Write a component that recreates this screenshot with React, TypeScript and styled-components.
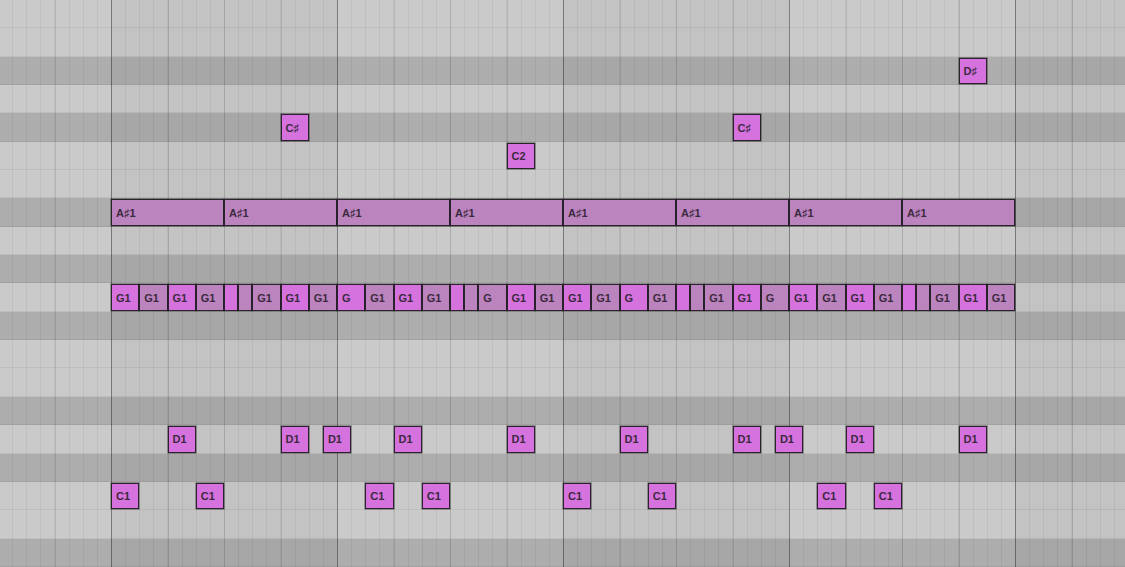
import React from 'react'
import styled, { createGlobalStyle } from 'styled-components'

const ORIGIN = 111
const BAR = 226
const EIGHTH = BAR / 8

// vertical line every `period` px, aligned on the clip start
const lines = (period: number, color: string) => {
  const o = ORIGIN % period
  return `repeating-linear-gradient(to right, ${color} ${o - period}px, ${color} ${
    o - period + 1
  }px, transparent ${o - period + 1}px, transparent ${o}px)`
}

const barShade = `repeating-linear-gradient(to right, rgba(0,0,0,0.035) ${
  ORIGIN - 2 * BAR
}px, rgba(0,0,0,0.035) ${ORIGIN - BAR}px, transparent ${ORIGIN - BAR}px, transparent ${ORIGIN}px)`

const GlobalStyle = createGlobalStyle`
  html, body {
    margin: 0;
    padding: 0;
    overflow: hidden;
    background: #c4c4c4;
  }
`

const Roll = styled.div`
  width: 1125px;
  height: 567px;
  display: flex;
  flex-direction: column;
  font-family: 'Liberation Sans', Arial, sans-serif;
`

type LaneTypes = {
  $black?: boolean
}

const Lane = styled.div<LaneTypes>`
  position: relative;
  flex: 1;
  box-sizing: border-box;
  border-bottom: 1px solid rgba(0, 0, 0, 0.06);
  background-color: ${({ $black }) => ($black ? '#adadad' : '#cacaca')};
  background-image: ${lines(BAR, 'rgba(0,0,0,0.28)')},
    ${lines(BAR / 4, 'rgba(0,0,0,0.1)')}, ${lines(BAR / 16, 'rgba(0,0,0,0.055)')},
    ${barShade};
`

type NoteTypes = {
  $muted?: boolean
}

const Note = styled.div<NoteTypes>`
  position: absolute;
  top: 1px;
  bottom: 0;
  box-sizing: border-box;
  border: 1px solid #2b232c;
  box-shadow: 0 0 0 0.6px rgba(35, 25, 36, 0.55);
  background: ${({ $muted }) => ($muted ? '#bb84bf' : '#d672de')};
  color: #3b2a3e;
  font-size: 11px;
  font-weight: bold;
  display: flex;
  align-items: center;
  padding-left: 4px;
  overflow: hidden;
  white-space: nowrap;
`

type NoteData = {
  pitch: string
  start: number
  length: number
  label?: string
  muted?: boolean
}

const pitches = [
  'F2', 'E2', 'D#2', 'D2', 'C#2', 'C2', 'B1', 'A#1', 'A1', 'G#1',
  'G1', 'F#1', 'F1', 'E1', 'D#1', 'D1', 'C#1', 'C1', 'B0', 'A#0'
]

const singles = (pitch: string, label: string, starts: number[]): NoteData[] =>
  starts.map((start) => ({ pitch, start, length: 1, label }))

const gLabels = [
  ['G1', 'G1', 'G1', 'G1', 'G1', 'G1', 'G1'],
  ['G', 'G1', 'G1', 'G1', 'G', 'G1', 'G1'],
  ['G1', 'G1', 'G', 'G1', 'G1', 'G1', 'G'],
  ['G1', 'G1', 'G1', 'G1', 'G1', 'G1', 'G1']
]

const gNotes: NoteData[] = gLabels.flatMap((l, bar) => {
  const b = bar * 8
  return [
    { pitch: 'G1', start: b, length: 1, label: l[0] },
    { pitch: 'G1', start: b + 1, length: 1, label: l[1], muted: true },
    { pitch: 'G1', start: b + 2, length: 1, label: l[2] },
    { pitch: 'G1', start: b + 3, length: 1, label: l[3], muted: true },
    { pitch: 'G1', start: b + 4, length: 0.5 },
    { pitch: 'G1', start: b + 4.5, length: 0.5, muted: true },
    { pitch: 'G1', start: b + 5, length: 1, label: l[4], muted: true },
    { pitch: 'G1', start: b + 6, length: 1, label: l[5] },
    { pitch: 'G1', start: b + 7, length: 1, label: l[6], muted: true }
  ]
})

const notes: NoteData[] = [
  ...singles('D#2', 'D♯', [30]),
  ...singles('C#2', 'C♯', [6, 22]),
  ...singles('C2', 'C2', [14]),
  ...[0, 1, 2, 3, 4, 5, 6, 7].map((i) => ({
    pitch: 'A#1',
    start: i * 4,
    length: 4,
    label: 'A♯1',
    muted: true
  })),
  ...gNotes,
  ...singles('D1', 'D1', [2, 6, 7.5, 10, 14, 18, 22, 23.5, 26, 30]),
  ...singles('C1', 'C1', [0, 3, 9, 11, 16, 19, 25, 27])
]

const App = () => (
  <>
    <GlobalStyle />
    <Roll>
      {pitches.map((pitch) => (
        <Lane key={pitch} $black={pitch.includes('#')}>
          {notes
            .filter((n) => n.pitch === pitch)
            .map((n) => (
              <Note
                key={`${pitch}-${n.start}`}
                $muted={n.muted}
                style={{
                  left: ORIGIN + n.start * EIGHTH,
                  width: n.length * EIGHTH
                }}
              >
                {n.label}
              </Note>
            ))}
        </Lane>
      ))}
    </Roll>
  </>
)

export default App
